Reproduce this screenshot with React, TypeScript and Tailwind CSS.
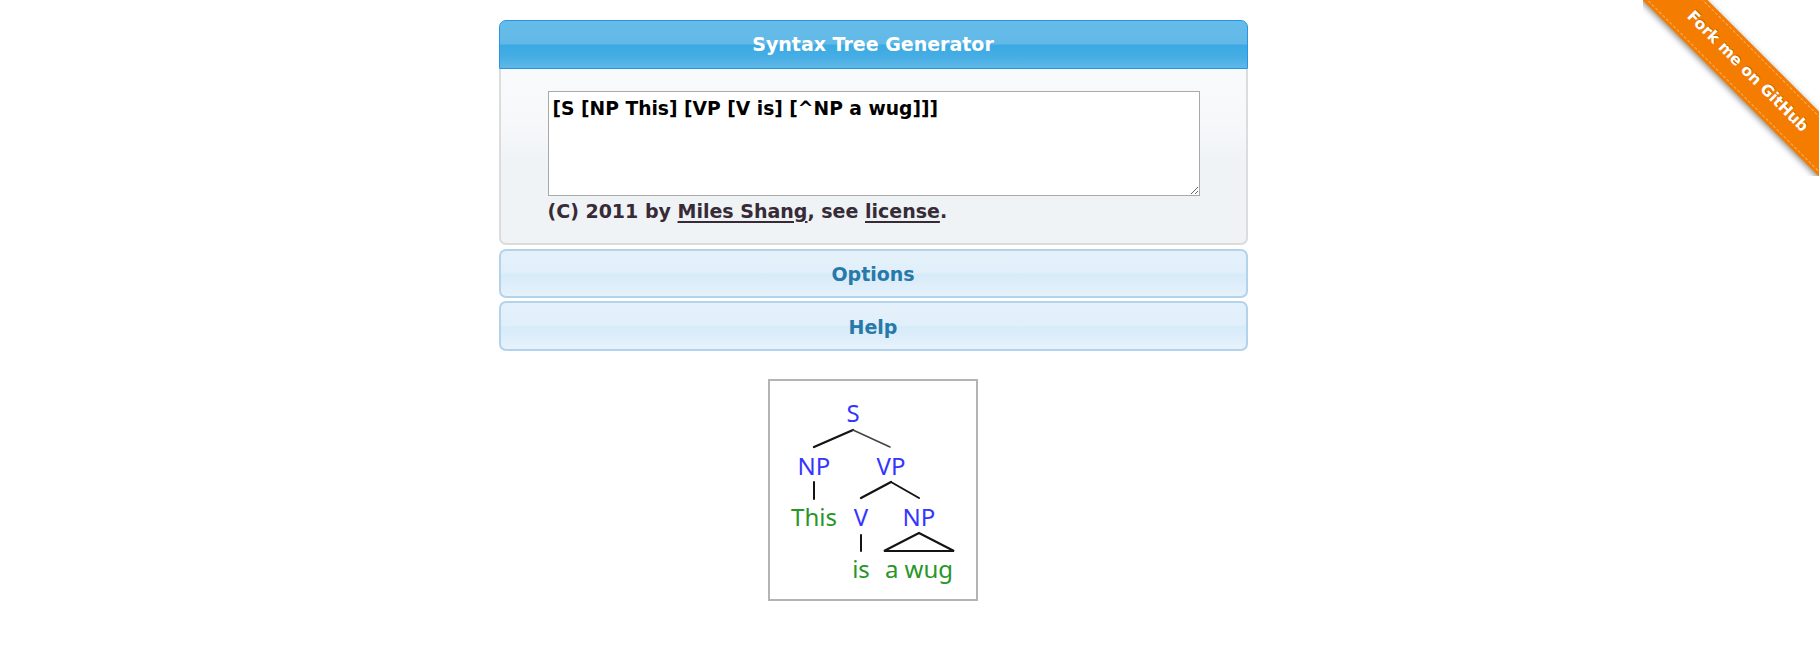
export default function App() {
  return (
    <div className="relative min-h-[650px] overflow-hidden bg-white font-['DejaVu_Sans',sans-serif]">
      {/* main column */}
      <div className="flex justify-center pr-[73px] pt-[20px]">
        <div className="flex w-[749px] flex-col">
          {/* active header */}
          <div className="flex h-[49px] items-center justify-center rounded-t-[7px] border border-[#2694e8] bg-[linear-gradient(to_bottom,#66bce9_0%,#62b9e7_48%,#3ba9e3_52%,#45ade4_75%,#5fb8e7_100%)] text-[19px] font-bold text-white">
            Syntax Tree Generator
          </div>
          <div className="rounded-b-[7px] border-2 border-t-0 border-[#dcdcdc] bg-[linear-gradient(to_bottom,#f9fafb_0%,#f7f8fa_30%,#eff3f6_55%,#eff3f6_100%)] px-[47px] pb-[19px] pt-[22px]">
            <textarea
              className="block h-[105px] w-[652px] border border-[#a9a9a9] bg-white px-[4px] pt-[5px] text-[18.7px] font-bold leading-[24px] text-black outline-none"
              defaultValue="[S [NP This] [VP [V is] [^NP a wug]]]"
            />
            <p className="mt-[2px] text-[19px] font-bold leading-[26px] text-[#362b36]">
              (C) 2011 by{' '}
              <a href="#" className="underline decoration-2 underline-offset-[3px]">
                Miles Shang
              </a>
              , see{' '}
              <a href="#" className="underline decoration-2 underline-offset-[3px]">
                license
              </a>
              .
            </p>
          </div>

          {/* collapsed sections */}
          <div className="mt-[4px] flex h-[49px] items-center justify-center rounded-[7px] border-2 border-[#b3d3ec] bg-[linear-gradient(to_bottom,#e4f1fb_0%,#e1effa_48%,#d7ebf9_52%,#deeefa_75%,#e6f2fb_100%)] pt-[2px] text-[19px] font-bold text-[#2779aa]">
            Options
          </div>
          <div className="mt-[3px] flex h-[50px] items-center justify-center rounded-[7px] border-2 border-[#b3d3ec] bg-[linear-gradient(to_bottom,#e4f1fb_0%,#e1effa_48%,#d7ebf9_52%,#deeefa_75%,#e6f2fb_100%)] pt-[2px] text-[19px] font-bold text-[#2779aa]">
            Help
          </div>
        </div>
      </div>

      {/* rendered tree */}
      <div className="flex justify-center pr-[73px] pt-[28px]">
        <div className="h-[222px] w-[210px] border-2 border-[#b4b4b4] bg-white">
          <svg width="206" height="218" viewBox="2 2 206 218" className="block font-['Noto_Sans',sans-serif]">
            <g stroke="#141414" strokeWidth="2" fill="none" strokeLinecap="round">
              <line x1="85" y1="51" x2="46" y2="68" strokeWidth="2.4" />
              <line x1="85" y1="51" x2="122" y2="68" stroke="#444" strokeWidth="1.6" />
              <line x1="46" y1="103" x2="46" y2="120" />
              <line x1="123" y1="103" x2="93" y2="119" strokeWidth="2.3" />
              <line x1="123" y1="103" x2="151" y2="119" />
              <line x1="93" y1="156" x2="93" y2="172" />
              <polygon points="151,154 116,172 186,172" strokeWidth="2.2" strokeLinejoin="miter" />
            </g>
            <g fontSize="24" textAnchor="middle">
              <g fill="#3535ff">
                <text x="85" y="43">S</text>
                <text x="46" y="96">NP</text>
                <text x="123" y="96">VP</text>
                <text x="93" y="147">V</text>
                <text x="151" y="147">NP</text>
              </g>
              <g fill="#289628">
                <text x="46" y="147">This</text>
                <text x="93" y="199">is</text>
                <text x="151" y="199">a wug</text>
              </g>
            </g>
          </svg>
        </div>
      </div>

      {/* fork ribbon */}
      <div className="absolute right-0 top-0 h-[176px] w-[176px] overflow-hidden">
        <a
          href="#"
          className="absolute left-[-26px] top-[48.5px] block h-[46px] w-[260px] rotate-45 bg-[#f47c00] py-[3px] shadow-[0_2px_6px_rgba(0,0,0,0.45)]"
        >
          <span className="flex h-full items-center justify-center border-y border-dashed border-white/40 font-['DejaVu_Sans',sans-serif] text-[15.5px] font-bold text-white [text-shadow:0_-1px_0_rgba(0,0,0,0.25)]">
            Fork me on GitHub
          </span>
        </a>
      </div>
    </div>
  )
}
